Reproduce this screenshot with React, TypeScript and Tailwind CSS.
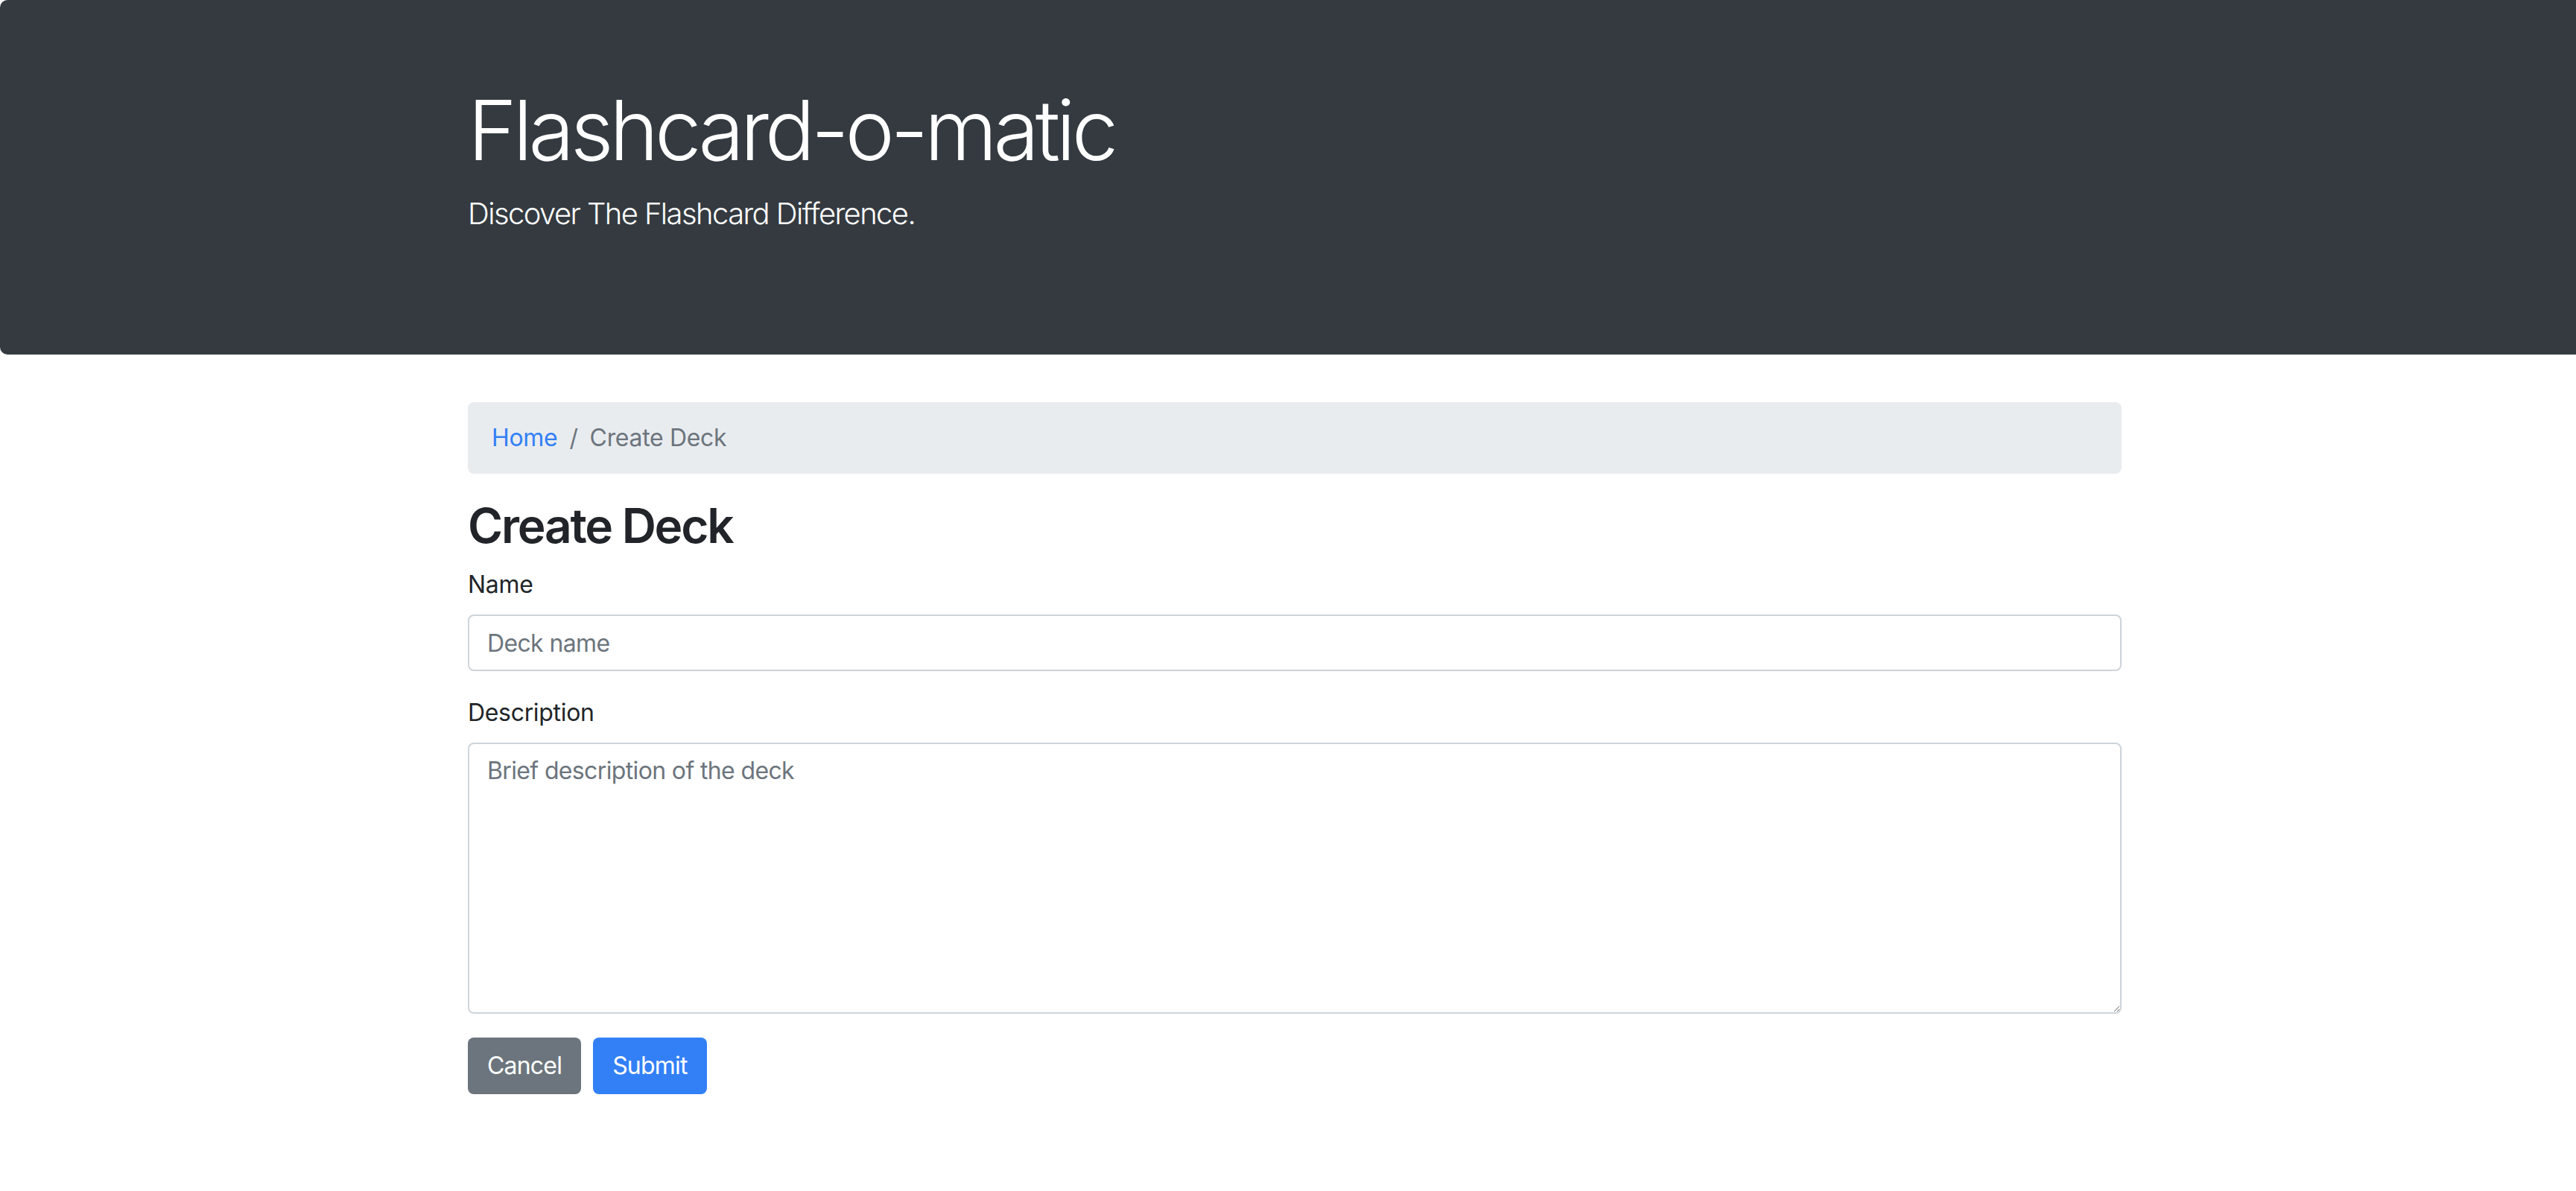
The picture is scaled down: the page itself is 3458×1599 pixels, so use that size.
import React from "react";

const font = { fontFamily: "Inter, 'Noto Sans', sans-serif" };

const Header = () => (
  <header className="bg-[#343a40] text-white rounded-[10px] pt-[107px] pb-[159px] mb-[64px]">
    <div className="w-[2220px] mx-auto">
      <h1 className="text-[112px] leading-[1.2] font-light tracking-[-0.047em] mb-[16px]">Flashcard-o-matic</h1>
      <p className="text-[40px] leading-[1.5] font-light tracking-[-0.04em]">Discover The Flashcard Difference.</p>
    </div>
  </header>
);

const Breadcrumb = () => (
  <nav className="bg-[#e9ecef] rounded-[8px] px-[32px] py-[24px] mb-[32px] text-[32px] leading-[48px]">
    <ol className="flex">
      <li>
        <a href="#" className="text-[#3380f6]">Home</a>
      </li>
      <li className="pl-[16px] text-[#6c757d]">
        <span className="pr-[16px]">/</span>
        Create Deck
      </li>
    </ol>
  </nav>
);

export default function App() {
  return (
    <div className="w-full min-h-screen overflow-hidden bg-white text-[#212529] tracking-[-0.02em]" style={font}>
      <div className="w-[3476px]">
        <Header />
        <main className="w-[2220px] mx-auto">
          <Breadcrumb />
          <h2 className="text-[64px] leading-[1.2] font-semibold tracking-[-0.035em] mb-[16px]">Create Deck</h2>
          <form>
            <div className="mb-[32px]">
              <label className="block text-[32px] leading-[48px] mb-[16px]">Name</label>
              <input
                type="text"
                placeholder="Deck name"
                className="block w-full h-[76px] px-[24px] py-[12px] text-[32px] leading-[48px] tracking-[-0.02em] border-2 border-[#ced4da] rounded-[8px] placeholder:text-[#6c757d] outline-none"
              />
            </div>
            <div className="mb-[32px]">
              <label className="block text-[32px] leading-[48px] mb-[16px]">Description</label>
              <textarea
                placeholder="Brief description of the deck"
                className="block w-full h-[364px] px-[24px] py-[12px] text-[32px] leading-[48px] tracking-[-0.02em] border-2 border-[#ced4da] rounded-[8px] placeholder:text-[#6c757d] outline-none"
              />
            </div>
            <div className="flex gap-[16px]">
              <button
                type="button"
                className="h-[76px] px-[24px] text-[32px] leading-[48px] tracking-[-0.025em] text-white bg-[#6c757d] border-2 border-transparent rounded-[8px]"
              >
                Cancel
              </button>
              <button
                type="submit"
                className="h-[76px] px-[24px] text-[32px] leading-[48px] tracking-[-0.025em] text-white bg-[#3380f6] border-2 border-transparent rounded-[8px]"
              >
                Submit
              </button>
            </div>
          </form>
        </main>
      </div>
    </div>
  );
}
